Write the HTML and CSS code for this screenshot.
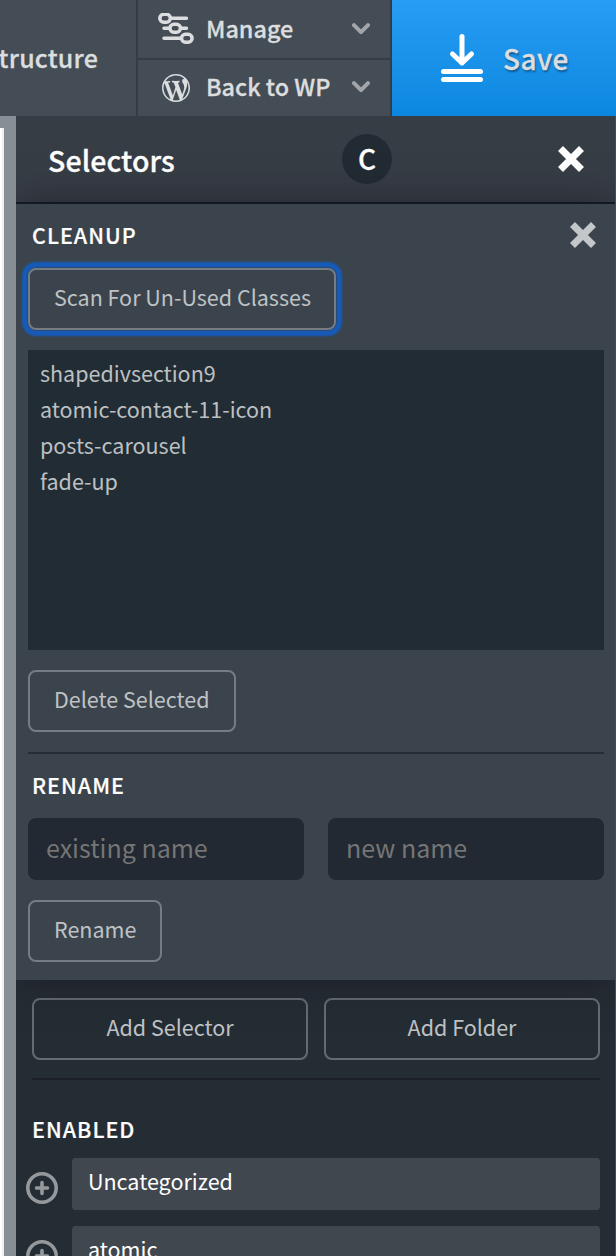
FILE: index.html
```html
<!DOCTYPE html>
<html lang="en">
<head>
    <meta charset="UTF-8">
    <meta name="viewport" content="width=device-width, initial-scale=1.0">
    <title>Selectors</title>
    <link rel="stylesheet" href="styles.css">
</head>
<body>
    <header class="toolbar">
        <div class="structure">Structure</div>
        <nav class="menus">
            <div class="menu-item">
                <svg class="menu-icon" width="36" height="32" viewBox="0 0 36 32" fill="none" stroke="currentColor" stroke-width="3.5" stroke-linecap="round">
                    <rect x="1.8" y="1.3" width="10.6" height="8" rx="4"/>
                    <path d="M12.5 5.3H28.5M6 15.3H11.5M22.5 15.3H28.5M6 25.3H23"/>
                    <rect x="11.9" y="11.3" width="10.6" height="8" rx="4"/>
                    <rect x="23.5" y="21.3" width="10.6" height="8" rx="4"/>
                </svg>
                <span class="menu-label">Manage</span>
                <svg class="chevron" width="18" height="12" viewBox="0 0 18 12"><path d="M2 2.200L9 9.200L16 2.200"/></svg>
            </div>
            <div class="menu-item">
                <svg class="menu-icon wp" width="28" height="28" viewBox="0 0 20 20" fill="currentColor">
                    <path d="M20 10c0-5.510-4.490-10-10-10C4.480 0 0 4.490 0 10c0 5.520 4.480 10 10 10 5.510 0 10-4.480 10-10zM7.780 15.370L4.370 6.220c.55-.02 1.170-.08 1.170-.08.5-.06.44-1.130-.06-1.110 0 0-1.450.11-2.370.11-.18 0-.37 0-.58-.01C4.120 2.690 6.870 1.110 10 1.110c2.330 0 4.450.87 6.050 2.340-.68-.11-1.650.39-1.650 1.580 0 .74.45 1.360.9 2.100.35.61.55 1.360.55 2.460 0 1.490-1.400 5-1.400 5l-3.030-8.370c.54-.02.82-.17.82-.17.5-.05.44-1.250-.06-1.220 0 0-1.440.12-2.380.12-.87 0-2.330-.12-2.330-.12-.5-.03-.56 1.200-.06 1.220l.92.08 1.260 3.410zM17.410 10c.24-.64.74-1.870.43-4.250.7 1.290 1.050 2.710 1.050 4.250 0 3.290-1.730 6.240-4.400 7.780.97-2.590 1.940-5.200 2.920-7.780zM6.100 18.090C3.120 16.650 1.110 13.530 1.110 10c0-1.300.23-2.480.72-3.590C3.250 10.300 4.670 14.200 6.100 18.090zm4.030-6.630l2.580 6.980c-.86.29-1.760.45-2.710.45-.79 0-1.570-.11-2.290-.33.81-2.380 1.620-4.740 2.420-7.100z"/>
                </svg>
                <span class="menu-label">Back to WP</span>
                <svg class="chevron" width="18" height="12" viewBox="0 0 18 12"><path d="M2 2.200L9 9.200L16 2.200"/></svg>
            </div>
        </nav>
        <div class="save">
            <svg width="42" height="48" viewBox="0 0 42 48" fill="none" stroke="#fff" stroke-width="5" stroke-linecap="round" stroke-linejoin="round">
                <path d="M21 2.500V29M11.500 20L21 29L30.500 20M2.500 37.500H39.500M2.500 45.500H39.500"/>
            </svg>
            <span>Save</span>
        </div>
    </header>

    <div class="workspace">
        <div class="canvas"><div class="page"></div></div>
        <aside class="panel">
            <div class="panel-header">
                <h1>Selectors</h1>
                <span class="badge">C</span>
                <svg class="close" width="26" height="26" viewBox="0 0 26 26"><path d="M2.500 2.500L23.500 23.500M23.500 2.500L2.500 23.500"/></svg>
            </div>

            <section class="tools">
                <div class="tools-title">
                    <h2>CLEANUP</h2>
                    <svg class="close" width="26" height="26" viewBox="0 0 26 26"><path d="M2.500 2.500L23.500 23.500M23.500 2.500L2.500 23.500"/></svg>
                </div>
                <button class="btn focused">Scan For Un-Used Classes</button>
                <ul class="class-list">
                    <li>shapedivsection9</li>
                    <li>atomic-contact-11-icon</li>
                    <li>posts-carousel</li>
                    <li>fade-up</li>
                </ul>
                <button class="btn">Delete Selected</button>
                <hr>
                <h2 class="rename-title">RENAME</h2>
                <div class="fields">
                    <input type="text" placeholder="existing name">
                    <input type="text" placeholder="new name">
                </div>
                <button class="btn">Rename</button>
            </section>

            <section class="selectors">
                <div class="add-buttons">
                    <button class="btn">Add Selector</button>
                    <button class="btn">Add Folder</button>
                </div>
                <hr>
                <h2>ENABLED</h2>
                <div class="folder">
                    <svg width="32" height="32" viewBox="0 0 32 32"><circle cx="16" cy="16" r="14.200"/><path d="M10.500 16H21.500M16 10.500V21.500"/></svg>
                    <div class="folder-name">Uncategorized</div>
                </div>
                <div class="folder">
                    <svg width="32" height="32" viewBox="0 0 32 32"><circle cx="16" cy="16" r="14.200"/><path d="M10.500 16H21.500M16 10.500V21.500"/></svg>
                    <div class="folder-name">atomic</div>
                </div>
            </section>
        </aside>
    </div>
</body>
</html>
```
FILE: styles.css
```css
* {
    margin: 0;
    padding: 0;
    box-sizing: border-box;
}

body {
    height: 1256px;
    overflow: hidden;
    background: #252d34;
    color: #fff;
    font-family: "Noto Sans CJK JP", "Noto Sans", sans-serif;
    font-size: 21.5px;
    line-height: 36px;
}

/* top bar */
.toolbar {
    display: flex;
    height: 116px;
    background: #353c45;
    color: #dcdddf;
    font-weight: 500;
}

.structure {
    display: flex;
    justify-content: flex-end;
    align-items: center;
    width: 136px;
    padding: 0 38px 3px 0;
    background: #444d55;
    font-size: 25px;
    letter-spacing: 0.2px;
    -webkit-text-stroke: 0.3px;
}

.menus {
    display: flex;
    flex-direction: column;
    gap: 2px;
    width: 252px;
    margin: 0 2px;
}

.menu-item {
    display: flex;
    align-items: center;
    height: 58px;
    padding: 0 20px;
    background: #444d55;
    font-size: 23.4px;
}

.menu-item + .menu-item {
    height: 56px;
    padding-bottom: 2px;
}

.menu-icon {
    margin-right: 12px;
}

.menu-icon.wp {
    margin: 2px 16px 0 4px;
}

.menu-label {
    flex: 1;
    padding-bottom: 3px;
    -webkit-text-stroke: 0.3px;
}

.chevron path {
    fill: none;
    stroke: #a2a6aa;
    stroke-width: 4;
    stroke-linecap: round;
    stroke-linejoin: round;
}

.save {
    display: flex;
    align-items: center;
    gap: 20px;
    flex: 1;
    padding-left: 49px;
    background: linear-gradient(#289df5, #0c87df);
    font-size: 28px;
    letter-spacing: 0.4px;
    text-shadow: 1px 2px 2px rgba(0, 0, 0, 0.4);
    -webkit-text-stroke: 0.3px;
}

/* area below the bar */
.workspace {
    display: flex;
    height: 1140px;
}

.canvas {
    width: 16px;
    padding-top: 12px;
    background: #878e95;
}

.page {
    width: 4px;
    height: 100%;
    background: #fff;
    border-right: 2px solid #eeeff0;
}

.panel {
    flex: 1;
    min-width: 0;
    overflow: hidden;
    border-right: 1px solid #444d55;
}

.panel-header {
    display: flex;
    align-items: center;
    height: 88px;
    padding: 0 31px 0 32px;
    background: #363d45;
    border-bottom: 2px solid #141c23;
}

.panel-header h1 {
    width: 294px;
    padding-top: 2px;
    font-size: 28.5px;
    font-weight: 500;
    letter-spacing: 0.1px;
    -webkit-text-stroke: 0.3px;
}

.badge {
    width: 50px;
    height: 50px;
    margin-right: auto;
    border-radius: 50%;
    background: #222b33;
    font-size: 28px;
    font-weight: 500;
    line-height: 48px;
    text-align: center;
    -webkit-text-stroke: 0.3px;
}

.close {
    overflow: visible;
}

.close path {
    stroke: #fff;
    stroke-width: 7;
}

h2 {
    font-size: 21.5px;
    font-weight: 500;
    letter-spacing: 1px;
    -webkit-text-stroke: 0.2px;
}

hr {
    height: 2px;
    border: 0;
    background: #252c33;
}

.btn {
    display: block;
    height: 62px;
    padding: 0 24px 5px;
    border: 2px solid #767c83;
    border-radius: 8px;
    background: transparent;
    color: #bfc2c5;
    font-family: inherit;
    font-size: 21.5px;
    white-space: nowrap;
}

.focused {
    width: 308px;
    box-shadow: 0 0 1px 1px #2b4a73, 0 0 2px 6px #165bb9;
}

/* cleanup and rename */
.tools {
    position: relative;
    height: 776px;
    padding: 12px 11px 0 12px;
    background: #3b444c;
    box-shadow: 0 0 36px -2px rgba(20, 16, 26, 0.6);
}

.tools-title {
    display: flex;
    justify-content: space-between;
    align-items: center;
    height: 38px;
    margin-bottom: 14px;
    padding: 0 8px 0 4px;
}

.tools-title .close path {
    stroke: #c4c7c9;
}

.class-list {
    height: 300px;
    margin: 20px 0;
    padding: 5px 12px;
    background: #222c34;
    color: #bdc0c2;
    list-style: none;
}

.tools hr {
    margin: 20px 0 13px;
}

.rename-title {
    padding-left: 4px;
}

.fields {
    display: grid;
    grid-template-columns: 1fr 1fr;
    gap: 24px;
    margin: 15px 0 20px;
}

input {
    width: 100%;
    height: 62px;
    padding: 0 18px 4px;
    border: 0;
    border-radius: 8px;
    background: #222932;
    font-family: inherit;
    font-size: 25px;
}

input::placeholder {
    color: #757575;
}

/* folder list */
.selectors {
    padding: 18px 15px 0 16px;
}

.add-buttons {
    display: grid;
    grid-template-columns: 1fr 1fr;
    gap: 16px;
}

.selectors .btn {
    border-color: #666b72;
}

.selectors hr {
    margin: 18px 0 31px;
    background: #1a2026;
}

.selectors h2 {
    margin-bottom: 11px;
}

.folder {
    display: flex;
    align-items: flex-end;
    height: 52px;
    margin: 0 0 16px -6px;
}

.folder svg {
    margin: 0 14px 6px 0;
    fill: none;
    stroke: #96999c;
    stroke-width: 3.6;
    stroke-linecap: round;
}

.folder-name {
    flex: 1;
    height: 52px;
    padding: 0 16px;
    border-radius: 4px;
    background: #40474e;
    line-height: 46px;
}
```
